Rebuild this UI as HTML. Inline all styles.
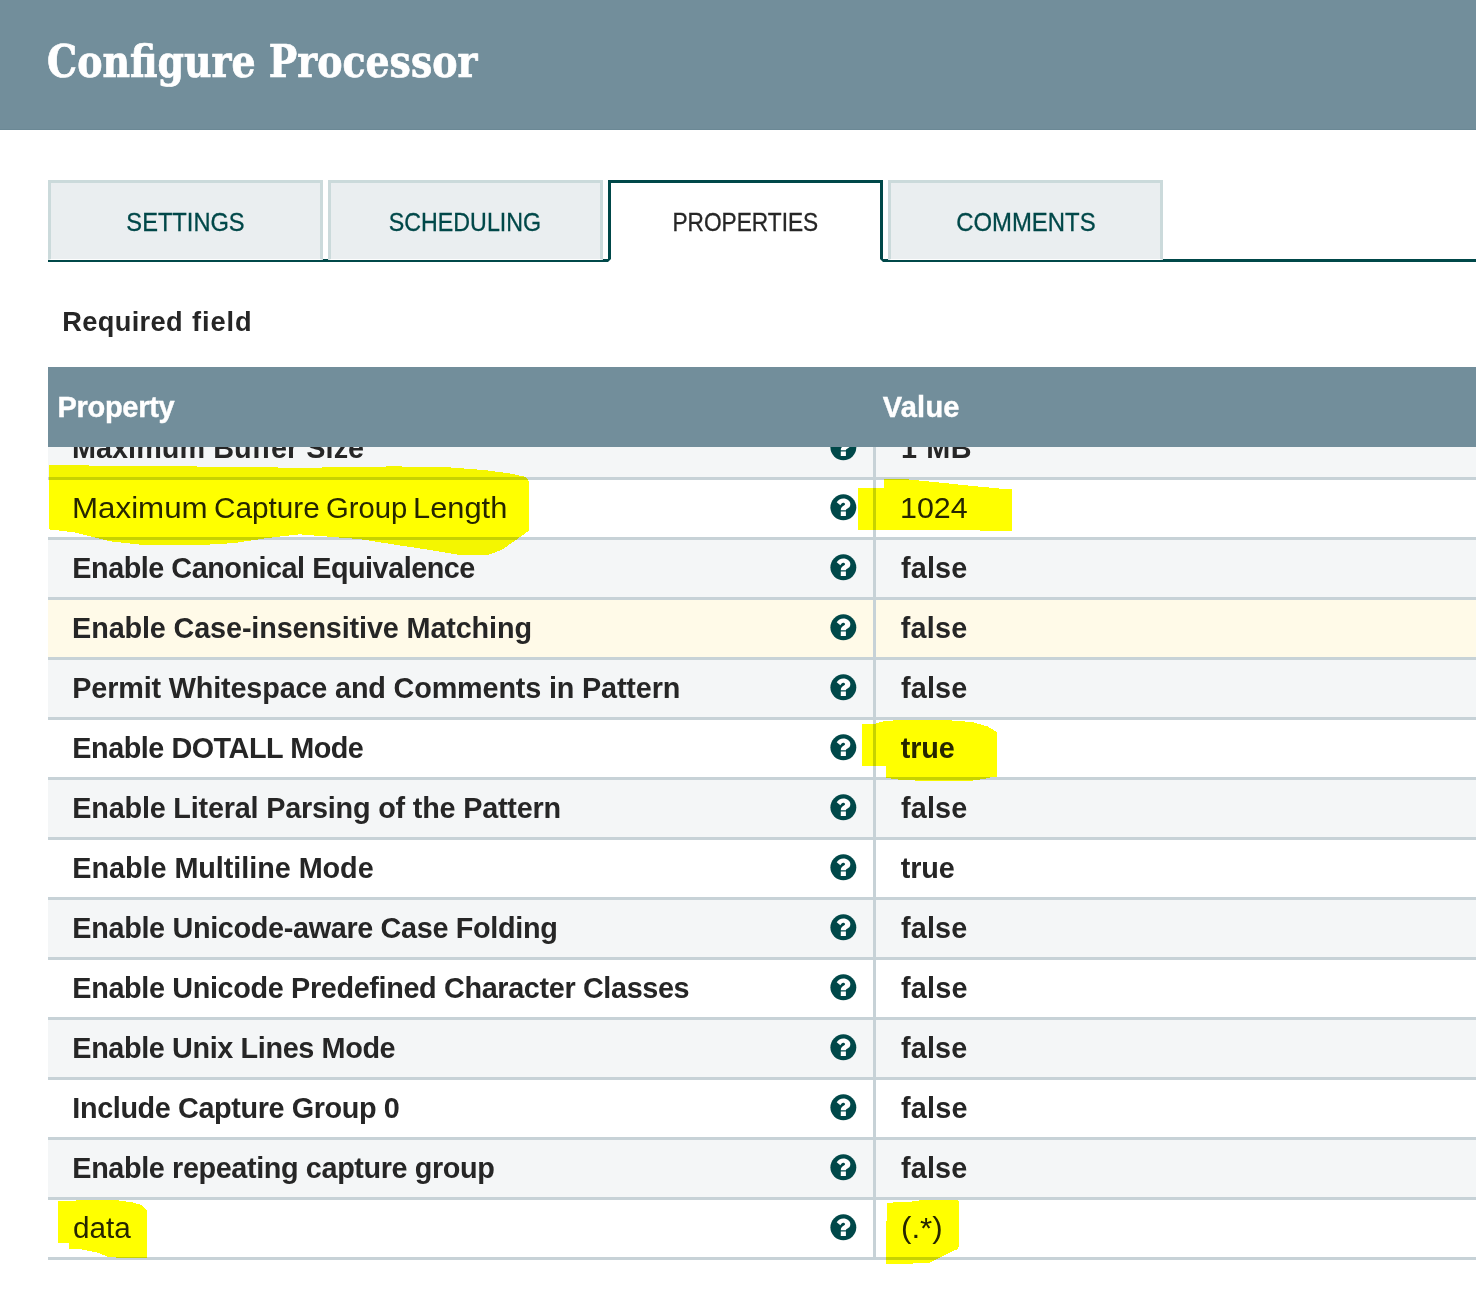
<!DOCTYPE html>
<html><head><meta charset="utf-8">
<style>
html,body{margin:0;padding:0;}
body{width:1476px;height:1293px;position:relative;overflow:hidden;background:#fff;font-family:"Liberation Sans",sans-serif;color:#262626;}
.abs{position:absolute;}
#hdr{left:0;top:0;width:1476px;height:129px;background:#728e9b;border-bottom:1px solid #6b8895;}
#title{left:47.09px;top:32px;font-family:"DejaVu Serif Condensed","DejaVu Serif","Liberation Serif",serif;font-weight:bold;font-size:45px;line-height:60px;color:#fff;-webkit-text-stroke:0.7px #fff;white-space:nowrap;transform-origin:0 0;transform:scaleX(0.9354);}
.tab{top:180px;width:269px;height:76px;border:3px solid #cbdadb;border-bottom:1px solid #fdfefe;z-index:1;background:#eaeef0;color:#004849;font-size:25px;line-height:79px;-webkit-text-stroke:0.3px currentColor;text-align:center;white-space:nowrap;}
.tab.sel{background:#fff;border:3px solid #004849;border-bottom:3px solid #fff;height:76px;color:#262626;z-index:2;}
.tab span{position:relative;display:inline-block;}
#tabline{left:48px;top:259px;width:1428px;height:3px;background:#004849;}
#req{left:62.32px;top:304px;font-size:27.2px;line-height:36px;font-weight:bold;white-space:nowrap;word-spacing:1.6px;}
#thead{left:48px;top:367px;width:1428px;height:80px;background:#728e9b;z-index:3;}
.th{top:0;color:#fff;-webkit-text-stroke:0.4px #fff;font-weight:bold;font-size:29px;line-height:80px;white-space:nowrap;}
.row{left:48px;width:1428px;height:57px;border-bottom:3px solid #c7d2d7;}
.row.g{background:#f4f6f7;}
.row.h{background:#fffae8;}
.row .p,.row .v{top:0;font-size:28.8px;line-height:57px;font-weight:bold;white-space:nowrap;}
.row .n{font-weight:normal;}
.row svg{position:absolute;left:782px;top:14px;}
#vline{left:873px;top:447px;width:3px;height:810px;background:#c7d2d7;}
</style></head><body>
<div id="hdr" class="abs"></div>
<div id="title" class="abs">Configure Processor</div>
<div class="abs tab" style="left:48px"><span style="left:-0.03px;transform:scaleX(0.9462)">SETTINGS</span></div>
<div class="abs tab" style="left:328px"><span style="left:-0.54px;transform:scaleX(0.9284)">SCHEDULING</span></div>
<div class="abs tab sel" style="left:608px"><span style="left:0.04px;transform:scaleX(0.9073)">PROPERTIES</span></div>
<div class="abs tab" style="left:888px"><span style="left:0.37px;transform:scaleX(0.9557)">COMMENTS</span></div>
<div id="tabline" class="abs"></div>
<div id="req" class="abs"><span style="letter-spacing:0.35px">Required</span> <span style="letter-spacing:0.9px">field</span></div>
<div id="rows">
<div class="abs row g" style="top:420px"><div class="abs p" style="left:23.91px;letter-spacing:0.055px">Maximum Buffer Size</div><svg width="28" height="28" viewBox="0 0 28 28"><g transform="translate(0.35,0.3)"><circle cx="13" cy="13" r="12.95" fill="#004849"/><path d="M6.35 8.05C7.8 5.6 10.2 4.25 13 4.25C16.9 4.25 20 6.7 20 10.05C20 12.6 18.3 13.7 16.8 14.5C15.9 15 15.55 15.4 15.55 15.95L10.45 15.95L10.45 15.4C10.45 13.6 11.6 12.5 13.2 11.5C14.2 10.9 14.7 10.4 14.7 9.7C14.7 8.9 13.9 8.35 12.8 8.35C11.6 8.35 10.9 9.2 10.05 11Z" fill="#fff"/><rect x="10.45" y="17.2" width="5.1" height="4.5" fill="#fff"/></g></svg><div class="abs v" style="left:852.91px;letter-spacing:0.65px">1 MB</div></div>
<div class="abs row " style="top:480px"><div class="abs p n" style="left:0"><span class="abs" style="top:0;left:23.7px;transform-origin:0 0;transform:scaleX(1.0871)">Maximum</span> <span class="abs" style="top:0;left:165.84px;transform-origin:0 0;transform:scaleX(1.0328)">Capture</span> <span class="abs" style="top:0;left:277.69px;transform-origin:0 0;transform:scaleX(1.0157)">Group</span> <span class="abs" style="top:0;left:364.84px;transform-origin:0 0;transform:scaleX(1.0705)">Length</span></div><svg width="28" height="28" viewBox="0 0 28 28"><g transform="translate(0.35,0.3)"><circle cx="13" cy="13" r="12.95" fill="#004849"/><path d="M6.35 8.05C7.8 5.6 10.2 4.25 13 4.25C16.9 4.25 20 6.7 20 10.05C20 12.6 18.3 13.7 16.8 14.5C15.9 15 15.55 15.4 15.55 15.95L10.45 15.95L10.45 15.4C10.45 13.6 11.6 12.5 13.2 11.5C14.2 10.9 14.7 10.4 14.7 9.7C14.7 8.9 13.9 8.35 12.8 8.35C11.6 8.35 10.9 9.2 10.05 11Z" fill="#fff"/><rect x="10.45" y="17.2" width="5.1" height="4.5" fill="#fff"/></g></svg><div class="abs v n" style="left:852.05px;letter-spacing:0px;transform-origin:0 0;transform:scaleX(1.0562)">1024</div></div>
<div class="abs row g" style="top:540px"><div class="abs p" style="left:24.33px;letter-spacing:-0.483px">Enable Canonical Equivalence</div><svg width="28" height="28" viewBox="0 0 28 28"><g transform="translate(0.35,0.3)"><circle cx="13" cy="13" r="12.95" fill="#004849"/><path d="M6.35 8.05C7.8 5.6 10.2 4.25 13 4.25C16.9 4.25 20 6.7 20 10.05C20 12.6 18.3 13.7 16.8 14.5C15.9 15 15.55 15.4 15.55 15.95L10.45 15.95L10.45 15.4C10.45 13.6 11.6 12.5 13.2 11.5C14.2 10.9 14.7 10.4 14.7 9.7C14.7 8.9 13.9 8.35 12.8 8.35C11.6 8.35 10.9 9.2 10.05 11Z" fill="#fff"/><rect x="10.45" y="17.2" width="5.1" height="4.5" fill="#fff"/></g></svg><div class="abs v" style="left:852.91px;letter-spacing:0.189px">false</div></div>
<div class="abs row h" style="top:600px"><div class="abs p" style="left:24.11px;letter-spacing:-0.136px">Enable Case-insensitive Matching</div><svg width="28" height="28" viewBox="0 0 28 28"><g transform="translate(0.35,0.3)"><circle cx="13" cy="13" r="12.95" fill="#004849"/><path d="M6.35 8.05C7.8 5.6 10.2 4.25 13 4.25C16.9 4.25 20 6.7 20 10.05C20 12.6 18.3 13.7 16.8 14.5C15.9 15 15.55 15.4 15.55 15.95L10.45 15.95L10.45 15.4C10.45 13.6 11.6 12.5 13.2 11.5C14.2 10.9 14.7 10.4 14.7 9.7C14.7 8.9 13.9 8.35 12.8 8.35C11.6 8.35 10.9 9.2 10.05 11Z" fill="#fff"/><rect x="10.45" y="17.2" width="5.1" height="4.5" fill="#fff"/></g></svg><div class="abs v" style="left:852.82px;letter-spacing:0.198px">false</div></div>
<div class="abs row g" style="top:660px"><div class="abs p" style="left:24.33px;letter-spacing:-0.163px">Permit Whitespace and Comments in Pattern</div><svg width="28" height="28" viewBox="0 0 28 28"><g transform="translate(0.35,0.3)"><circle cx="13" cy="13" r="12.95" fill="#004849"/><path d="M6.35 8.05C7.8 5.6 10.2 4.25 13 4.25C16.9 4.25 20 6.7 20 10.05C20 12.6 18.3 13.7 16.8 14.5C15.9 15 15.55 15.4 15.55 15.95L10.45 15.95L10.45 15.4C10.45 13.6 11.6 12.5 13.2 11.5C14.2 10.9 14.7 10.4 14.7 9.7C14.7 8.9 13.9 8.35 12.8 8.35C11.6 8.35 10.9 9.2 10.05 11Z" fill="#fff"/><rect x="10.45" y="17.2" width="5.1" height="4.5" fill="#fff"/></g></svg><div class="abs v" style="left:852.91px;letter-spacing:0.189px">false</div></div>
<div class="abs row " style="top:720px"><div class="abs p" style="left:24.33px;letter-spacing:-0.48px">Enable DOTALL Mode</div><svg width="28" height="28" viewBox="0 0 28 28"><g transform="translate(0.35,0.3)"><circle cx="13" cy="13" r="12.95" fill="#004849"/><path d="M6.35 8.05C7.8 5.6 10.2 4.25 13 4.25C16.9 4.25 20 6.7 20 10.05C20 12.6 18.3 13.7 16.8 14.5C15.9 15 15.55 15.4 15.55 15.95L10.45 15.95L10.45 15.4C10.45 13.6 11.6 12.5 13.2 11.5C14.2 10.9 14.7 10.4 14.7 9.7C14.7 8.9 13.9 8.35 12.8 8.35C11.6 8.35 10.9 9.2 10.05 11Z" fill="#fff"/><rect x="10.45" y="17.2" width="5.1" height="4.5" fill="#fff"/></g></svg><div class="abs v" style="left:852.74px;letter-spacing:-0.108px">true</div></div>
<div class="abs row g" style="top:780px"><div class="abs p" style="left:24.33px;letter-spacing:-0.201px">Enable Literal Parsing of the Pattern</div><svg width="28" height="28" viewBox="0 0 28 28"><g transform="translate(0.35,0.3)"><circle cx="13" cy="13" r="12.95" fill="#004849"/><path d="M6.35 8.05C7.8 5.6 10.2 4.25 13 4.25C16.9 4.25 20 6.7 20 10.05C20 12.6 18.3 13.7 16.8 14.5C15.9 15 15.55 15.4 15.55 15.95L10.45 15.95L10.45 15.4C10.45 13.6 11.6 12.5 13.2 11.5C14.2 10.9 14.7 10.4 14.7 9.7C14.7 8.9 13.9 8.35 12.8 8.35C11.6 8.35 10.9 9.2 10.05 11Z" fill="#fff"/><rect x="10.45" y="17.2" width="5.1" height="4.5" fill="#fff"/></g></svg><div class="abs v" style="left:852.91px;letter-spacing:0.189px">false</div></div>
<div class="abs row " style="top:840px"><div class="abs p" style="left:24.33px;letter-spacing:-0.052px">Enable Multiline Mode</div><svg width="28" height="28" viewBox="0 0 28 28"><g transform="translate(0.35,0.3)"><circle cx="13" cy="13" r="12.95" fill="#004849"/><path d="M6.35 8.05C7.8 5.6 10.2 4.25 13 4.25C16.9 4.25 20 6.7 20 10.05C20 12.6 18.3 13.7 16.8 14.5C15.9 15 15.55 15.4 15.55 15.95L10.45 15.95L10.45 15.4C10.45 13.6 11.6 12.5 13.2 11.5C14.2 10.9 14.7 10.4 14.7 9.7C14.7 8.9 13.9 8.35 12.8 8.35C11.6 8.35 10.9 9.2 10.05 11Z" fill="#fff"/><rect x="10.45" y="17.2" width="5.1" height="4.5" fill="#fff"/></g></svg><div class="abs v" style="left:852.74px;letter-spacing:-0.108px">true</div></div>
<div class="abs row g" style="top:900px"><div class="abs p" style="left:24.33px;letter-spacing:-0.332px">Enable Unicode-aware Case Folding</div><svg width="28" height="28" viewBox="0 0 28 28"><g transform="translate(0.35,0.3)"><circle cx="13" cy="13" r="12.95" fill="#004849"/><path d="M6.35 8.05C7.8 5.6 10.2 4.25 13 4.25C16.9 4.25 20 6.7 20 10.05C20 12.6 18.3 13.7 16.8 14.5C15.9 15 15.55 15.4 15.55 15.95L10.45 15.95L10.45 15.4C10.45 13.6 11.6 12.5 13.2 11.5C14.2 10.9 14.7 10.4 14.7 9.7C14.7 8.9 13.9 8.35 12.8 8.35C11.6 8.35 10.9 9.2 10.05 11Z" fill="#fff"/><rect x="10.45" y="17.2" width="5.1" height="4.5" fill="#fff"/></g></svg><div class="abs v" style="left:852.91px;letter-spacing:0.189px">false</div></div>
<div class="abs row " style="top:960px"><div class="abs p" style="left:24.33px;letter-spacing:-0.354px">Enable Unicode Predefined Character Classes</div><svg width="28" height="28" viewBox="0 0 28 28"><g transform="translate(0.35,0.3)"><circle cx="13" cy="13" r="12.95" fill="#004849"/><path d="M6.35 8.05C7.8 5.6 10.2 4.25 13 4.25C16.9 4.25 20 6.7 20 10.05C20 12.6 18.3 13.7 16.8 14.5C15.9 15 15.55 15.4 15.55 15.95L10.45 15.95L10.45 15.4C10.45 13.6 11.6 12.5 13.2 11.5C14.2 10.9 14.7 10.4 14.7 9.7C14.7 8.9 13.9 8.35 12.8 8.35C11.6 8.35 10.9 9.2 10.05 11Z" fill="#fff"/><rect x="10.45" y="17.2" width="5.1" height="4.5" fill="#fff"/></g></svg><div class="abs v" style="left:852.91px;letter-spacing:0.256px">false</div></div>
<div class="abs row g" style="top:1020px"><div class="abs p" style="left:24.33px;letter-spacing:-0.378px">Enable Unix Lines Mode</div><svg width="28" height="28" viewBox="0 0 28 28"><g transform="translate(0.35,0.3)"><circle cx="13" cy="13" r="12.95" fill="#004849"/><path d="M6.35 8.05C7.8 5.6 10.2 4.25 13 4.25C16.9 4.25 20 6.7 20 10.05C20 12.6 18.3 13.7 16.8 14.5C15.9 15 15.55 15.4 15.55 15.95L10.45 15.95L10.45 15.4C10.45 13.6 11.6 12.5 13.2 11.5C14.2 10.9 14.7 10.4 14.7 9.7C14.7 8.9 13.9 8.35 12.8 8.35C11.6 8.35 10.9 9.2 10.05 11Z" fill="#fff"/><rect x="10.45" y="17.2" width="5.1" height="4.5" fill="#fff"/></g></svg><div class="abs v" style="left:852.91px;letter-spacing:0.189px">false</div></div>
<div class="abs row " style="top:1080px"><div class="abs p" style="left:24.33px;letter-spacing:-0.39px">Include Capture Group 0</div><svg width="28" height="28" viewBox="0 0 28 28"><g transform="translate(0.35,0.3)"><circle cx="13" cy="13" r="12.95" fill="#004849"/><path d="M6.35 8.05C7.8 5.6 10.2 4.25 13 4.25C16.9 4.25 20 6.7 20 10.05C20 12.6 18.3 13.7 16.8 14.5C15.9 15 15.55 15.4 15.55 15.95L10.45 15.95L10.45 15.4C10.45 13.6 11.6 12.5 13.2 11.5C14.2 10.9 14.7 10.4 14.7 9.7C14.7 8.9 13.9 8.35 12.8 8.35C11.6 8.35 10.9 9.2 10.05 11Z" fill="#fff"/><rect x="10.45" y="17.2" width="5.1" height="4.5" fill="#fff"/></g></svg><div class="abs v" style="left:852.91px;letter-spacing:0.256px">false</div></div>
<div class="abs row g" style="top:1140px"><div class="abs p" style="left:24.33px;letter-spacing:-0.382px">Enable repeating capture group</div><svg width="28" height="28" viewBox="0 0 28 28"><g transform="translate(0.35,0.3)"><circle cx="13" cy="13" r="12.95" fill="#004849"/><path d="M6.35 8.05C7.8 5.6 10.2 4.25 13 4.25C16.9 4.25 20 6.7 20 10.05C20 12.6 18.3 13.7 16.8 14.5C15.9 15 15.55 15.4 15.55 15.95L10.45 15.95L10.45 15.4C10.45 13.6 11.6 12.5 13.2 11.5C14.2 10.9 14.7 10.4 14.7 9.7C14.7 8.9 13.9 8.35 12.8 8.35C11.6 8.35 10.9 9.2 10.05 11Z" fill="#fff"/><rect x="10.45" y="17.2" width="5.1" height="4.5" fill="#fff"/></g></svg><div class="abs v" style="left:852.91px;letter-spacing:0.189px">false</div></div>
<div class="abs row " style="top:1200px"><div class="abs p n" style="left:24.59px;letter-spacing:0px;transform-origin:0 0;transform:scaleX(1.0303)">data</div><svg width="28" height="28" viewBox="0 0 28 28"><g transform="translate(0.35,0.3)"><circle cx="13" cy="13" r="12.95" fill="#004849"/><path d="M6.35 8.05C7.8 5.6 10.2 4.25 13 4.25C16.9 4.25 20 6.7 20 10.05C20 12.6 18.3 13.7 16.8 14.5C15.9 15 15.55 15.4 15.55 15.95L10.45 15.95L10.45 15.4C10.45 13.6 11.6 12.5 13.2 11.5C14.2 10.9 14.7 10.4 14.7 9.7C14.7 8.9 13.9 8.35 12.8 8.35C11.6 8.35 10.9 9.2 10.05 11Z" fill="#fff"/><rect x="10.45" y="17.2" width="5.1" height="4.5" fill="#fff"/></g></svg><div class="abs v n" style="left:852.53px;letter-spacing:0px;transform-origin:0 0;transform:scaleX(1.0865)">(.*)</div></div>
</div>
<div id="vline" class="abs"></div>
<div id="thead" class="abs"><div class="abs th" style="left:9.43px;letter-spacing:-0.286px">Property</div><div class="abs th" style="left:834.78px;letter-spacing:0.228px">Value</div></div>
<svg class="abs" id="hl" width="1476" height="1293" viewBox="0 0 1476 1293" style="left:0;top:0;mix-blend-mode:multiply;z-index:5" shape-rendering="crispEdges">
<g fill="#ffff00">
<polygon points="48.8,465.2 72,465.2 110,465.9 163,465.6 216,467 269,467.3 300,468 343,467 396,466.4 448.5,467.3 484,470 510,473.5 526,477 529,481.4 529,530.7 519,537.8 501.4,550.1 489,554.5 457.3,554.5 431,550.1 395.7,544.8 360.5,539.2 325.2,536.4 300,534.3 269,537.8 233.8,543.1 198.5,545.2 145.7,545.2 110.5,541.3 75.2,532.5 48.8,529.3"/>
<polygon points="857.9,488 884.1,488 884.1,479.3 907.3,479.3 972,485.9 1001.2,488.7 1012.2,488.9 1012.2,530.7 979.9,530.7 979.9,529.8 857.9,529.8"/>
<polygon points="861.8,724.4 873.2,724.4 881.7,721.6 898.8,720 945.1,720 972,722 987.8,726.5 997,732 997,776.8 990.2,777.5 984.1,778.9 972,780.7 918.3,780.7 897.6,779.5 886,777.7 886,766.1 861.8,766.1"/>
<polygon points="57.9,1201.1 75.8,1201.1 75.8,1200 115.9,1200 133.2,1202.5 141.9,1205.2 147.1,1210.6 147.1,1257.8 121.3,1257.8 108.3,1257 98.5,1252.9 81.2,1249.4 69.1,1248.8 69.1,1242.9 57.9,1242.9"/>
<polygon points="886.9,1202.8 914.2,1201.4 921.8,1200 957,1200 958.9,1201.9 958.9,1246.4 957.6,1249.1 944.6,1255 929.4,1262.6 906.6,1263.9 886,1263.9 886,1221.4 886.9,1221.4"/>
</g>
</svg>

</body></html>
